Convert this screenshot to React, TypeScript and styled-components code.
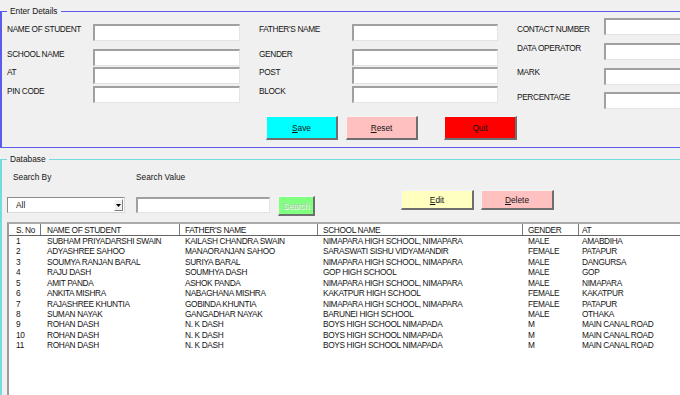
import React from "react";
import styled, { createGlobalStyle } from "styled-components";

const GlobalStyle = createGlobalStyle`
  html, body {
    margin: 0;
    padding: 0;
    background: #f0f0f0;
  }
  body {
    font-family: "Liberation Sans", Arial, sans-serif;
    font-size: 8.3px;
    color: #141414;
  }
`;

const students = [
  ["1", "SUBHAM PRIYADARSHI SWAIN", "KAILASH CHANDRA SWAIN", "NIMAPARA HIGH SCHOOL, NIMAPARA", "MALE", "AMABDIHA"],
  ["2", "ADYASHREE SAHOO", "MANAORANJAN SAHOO", "SARASWATI SISHU VIDYAMANDIR", "FEMALE", "PATAPUR"],
  ["3", "SOUMYA RANJAN BARAL", "SURIYA BARAL", "NIMAPARA HIGH SCHOOL, NIMAPARA", "MALE", "DANGURSA"],
  ["4", "RAJU DASH", "SOUMHYA DASH", "GOP HIGH SCHOOL", "MALE", "GOP"],
  ["5", "AMIT PANDA", "ASHOK PANDA", "NIMAPARA HIGH SCHOOL, NIMAPARA", "MALE", "NIMAPARA"],
  ["6", "ANKITA MISHRA", "NABAGHANA MISHRA", "KAKATPUR HIGH SCHOOL", "FEMALE", "KAKATPUR"],
  ["7", "RAJASHREE KHUNTIA", "GOBINDA KHUNTIA", "NIMAPARA HIGH SCHOOL, NIMAPARA", "FEMALE", "PATAPUR"],
  ["8", "SUMAN NAYAK", "GANGADHAR NAYAK", "BARUNEI HIGH SCHOOL", "MALE", "OTHAKA"],
  ["9", "ROHAN DASH", "N. K DASH", "BOYS HIGH SCHOOL NIMAPADA", "M", "MAIN CANAL ROAD"],
  ["10", "ROHAN DASH", "N. K DASH", "BOYS HIGH SCHOOL NIMAPADA", "M", "MAIN CANAL ROAD"],
  ["11", "ROHAN DASH", "N. K DASH", "BOYS HIGH SCHOOL NIMAPADA", "M", "MAIN CANAL ROAD"],
];

const headers = ["S. No", "NAME OF STUDENT", "FATHER'S NAME", "SCHOOL NAME", "GENDER", "AT"];
const colPad = [7, 6, 5, 5, 5, 3];

type FieldDef = { label: string; mt: number; lo: number };

const columns: { labelW: number; inputW: number; fields: FieldDef[] }[] = [
  {
    labelW: 86,
    inputW: 147,
    fields: [
      { label: "NAME OF STUDENT", mt: 8, lo: 0 },
      { label: "SCHOOL NAME", mt: 8, lo: 0 },
      { label: "AT", mt: 1, lo: 0 },
      { label: "PIN CODE", mt: 2, lo: 0 },
    ],
  },
  {
    labelW: 93,
    inputW: 146,
    fields: [
      { label: "FATHER'S NAME", mt: 8, lo: 0 },
      { label: "GENDER", mt: 8, lo: 0 },
      { label: "POST", mt: 1, lo: 0 },
      { label: "BLOCK", mt: 2, lo: 0 },
    ],
  },
  {
    labelW: 87,
    inputW: 146,
    fields: [
      { label: "CONTACT NUMBER", mt: 2, lo: 6 },
      { label: "DATA OPERATOR", mt: 8, lo: 0 },
      { label: "MARK", mt: 8, lo: -1 },
      { label: "PERCENTAGE", mt: 7, lo: 0 },
    ],
  },
];

const App = () => {
  return (
    <Screen>
      <GlobalStyle />
      <Frame $color="#5c5cec">
        <Legend>Enter Details</Legend>
        <FieldGrid>
          {columns.map((col, ci) => (
            <Column key={ci}>
              {col.fields.map((f) => (
                <Field key={f.label} $mt={f.mt}>
                  <Label $w={col.labelW} $lo={f.lo}>
                    {f.label}
                  </Label>
                  <TextBox $w={col.inputW} />
                </Field>
              ))}
            </Column>
          ))}
        </FieldGrid>
        <ButtonRow>
          <Button $bg="#00ffff" $w={72} $h={24}>
            <u>S</u>ave
          </Button>
          <Button $bg="#ffc0c0" $w={72} $h={24} $ml={8}>
            <u>R</u>eset
          </Button>
          <Button $bg="#ff0000" $w={73} $h={24} $ml={26}>
            Quit
          </Button>
        </ButtonRow>
      </Frame>

      <Frame $color="#74dcdc">
        <Legend>Database</Legend>
        <SearchBar>
          <SearchGroup $w={118}>
            <Caption $pl={6}>Search By</Caption>
            <Combo>
              <span>All</span>
              <DropButton>
                <svg width="5" height="3" viewBox="0 0 5 3">
                  <path d="M0 0h5L2.5 3z" fill="#000" />
                </svg>
              </DropButton>
            </Combo>
          </SearchGroup>
          <SearchGroup $w={134} $ml={11}>
            <Caption $pl={0}>Search Value</Caption>
            <TextBox $w={134} $h={16} />
          </SearchGroup>
          <Button $bg="#80ff80" $w={37} $h={20} $ml={8} $mt={32} $disabled>
            Search
          </Button>
          <Button $bg="#ffffc0" $w={73} $h={20} $ml={86} $mt={26}>
            <u>E</u>dit
          </Button>
          <Button $bg="#ffc0c0" $w={73} $h={20} $ml={7} $mt={26}>
            <u>D</u>elete
          </Button>
        </SearchBar>
        <ListView>
          <HeaderRow>
            {headers.map((h, i) => (
              <HeaderCell key={h} $pl={colPad[i]}>
                {h}
              </HeaderCell>
            ))}
          </HeaderRow>
          {students.map((r) => (
            <DataRow key={r[0]}>
              {r.map((c, i) => (
                <Cell key={i} $pl={colPad[i]}>
                  {c}
                </Cell>
              ))}
            </DataRow>
          ))}
        </ListView>
      </Frame>
    </Screen>
  );
};

export default App;

const Screen = styled.div`
  width: 680px;
  height: 395px;
  overflow: hidden;
  background: #f0f0f0;
`;

const Frame = styled.fieldset<{ $color: string }>`
  margin: 6px 0 0 0;
  width: 780px;
  min-width: 0;
  box-sizing: border-box;
  border: 1px solid ${(p) => p.$color};
  border-left-width: 2px;
  padding: 0 0 7px 5px;
`;

const Legend = styled.legend`
  padding: 0 3px;
  line-height: 11px;
  font-size: 8.3px;
`;

const FieldGrid = styled.div`
  display: flex;
  align-items: flex-start;
  gap: 19px;
  margin-top: -1px;
`;

const Column = styled.div`
  display: flex;
  flex-direction: column;
`;

const Field = styled.div<{ $mt: number }>`
  display: flex;
  align-items: flex-start;
  margin-top: ${(p) => p.$mt}px;
`;

const Label = styled.div<{ $w: number; $lo: number }>`
  width: ${(p) => p.$w}px;
  margin-top: ${(p) => p.$lo}px;
  line-height: 10px;
  letter-spacing: -0.35px;
  white-space: nowrap;
`;

const TextBox = styled.div<{ $w: number; $h?: number }>`
  width: ${(p) => p.$w}px;
  height: ${(p) => p.$h ?? 17}px;
  box-sizing: border-box;
  background: #ffffff;
  border-style: solid;
  border-width: 2px 1px 1px 2px;
  border-color: #a0a0a0 #e3e3e3 #e3e3e3 #a0a0a0;
`;

const ButtonRow = styled.div`
  display: flex;
  margin-top: 7px;
  padding-left: 259px;
`;

const Button = styled.div<{
  $bg: string;
  $w: number;
  $h: number;
  $ml?: number;
  $mt?: number;
  $disabled?: boolean;
}>`
  width: ${(p) => p.$w}px;
  height: ${(p) => p.$h}px;
  margin-left: ${(p) => p.$ml ?? 0}px;
  margin-top: ${(p) => p.$mt ?? 0}px;
  box-sizing: border-box;
  background: ${(p) => p.$bg};
  border-style: solid;
  border-width: 1px 2px 2px 1px;
  border-color: #f4f4f4 #6e6e6e #6e6e6e #f4f4f4;
  display: flex;
  align-items: center;
  justify-content: center;
  font-size: 8.3px;
  color: ${(p) => (p.$disabled ? "#b4c8b4" : "#141414")};
  text-shadow: ${(p) => (p.$disabled ? "1px 1px 0 #e8ffe8" : "none")};
  flex-shrink: 0;

  u {
    text-decoration-thickness: 1px;
    text-underline-offset: 1px;
  }
`;

const SearchBar = styled.div`
  display: flex;
  align-items: flex-start;
  margin-top: -1px;
`;

const SearchGroup = styled.div<{ $w: number; $ml?: number }>`
  width: ${(p) => p.$w}px;
  margin-left: ${(p) => p.$ml ?? 0}px;
  display: flex;
  flex-direction: column;
  flex-shrink: 0;
`;

const Caption = styled.div<{ $pl: number }>`
  margin-top: 8px;
  margin-bottom: 15px;
  padding-left: ${(p) => p.$pl}px;
  line-height: 10px;
`;

const Combo = styled.div`
  height: 16px;
  box-sizing: border-box;
  background: #ffffff;
  border-style: solid;
  border-width: 1px;
  border-color: #8c8c8c #d8d8d8 #d8d8d8 #8c8c8c;
  display: flex;
  align-items: center;
  justify-content: space-between;
  padding: 0 1px 0 8px;
`;

const DropButton = styled.span`
  width: 9px;
  height: 12px;
  box-sizing: border-box;
  background: #f0f0f0;
  border-style: solid;
  border-width: 1px;
  border-color: #ffffff #808080 #808080 #ffffff;
  display: flex;
  align-items: center;
  justify-content: center;
`;

const gridCols = "32px 139px 138px 205px 56px 220px";

const ListView = styled.div`
  margin-top: 6px;
  width: 800px;
  height: 220px;
  box-sizing: border-box;
  background: #ffffff;
  border-top: 2px solid #aaaaaa;
  border-left: 2px solid #9a9a9a;
  letter-spacing: -0.35px;
`;

const HeaderRow = styled.div`
  display: grid;
  grid-template-columns: ${gridCols};
  height: 11px;
  border-bottom: 1px solid #646464;
`;

const HeaderCell = styled.div<{ $pl: number }>`
  padding-left: ${(p) => p.$pl}px;
  line-height: 12px;
  border-right: 1px solid #7a7a7a;
  white-space: nowrap;
  overflow: hidden;
`;

const DataRow = styled.div`
  display: grid;
  grid-template-columns: ${gridCols};
  height: 10.43px;
`;

const Cell = styled.div<{ $pl: number }>`
  padding-left: ${(p) => p.$pl}px;
  line-height: 10.43px;
  white-space: nowrap;
  overflow: hidden;
`;
